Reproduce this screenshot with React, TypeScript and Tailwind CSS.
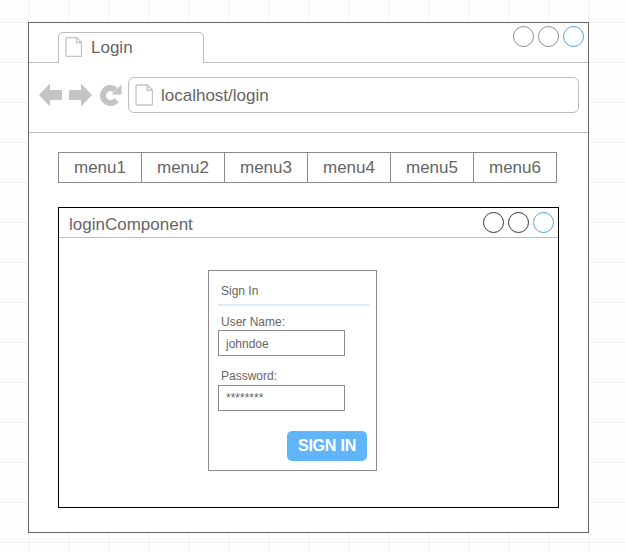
const menus = ['menu1', 'menu2', 'menu3', 'menu4', 'menu5', 'menu6']

const FileIcon = ({ className }: { className: string }) => (
  <svg className={className} viewBox="0 0 17 20" fill="none" stroke="#c4c4c4" strokeWidth="1.3">
    <path d="M1 1.5a1 1 0 0 1 1-1h9.5l5 5V18.5a1 1 0 0 1-1 1H2a1 1 0 0 1-1-1Z" />
    <path d="M11.5 .5V5.500H16.500" />
  </svg>
)

const WindowButtons = ({ dark }: { dark?: boolean }) => {
  const ring = dark ? 'border-[#333]' : 'border-[#8c8c8c]'
  return (
    <div className="flex gap-1">
      <div className={`w-[21px] h-[21px] rounded-full border ${ring}`} />
      <div className={`w-[21px] h-[21px] rounded-full border ${ring}`} />
      <div className="w-[21px] h-[21px] rounded-full border border-[#4fa3d8]" />
    </div>
  )
}

const NavIcons = () => (
  <div className="flex items-center gap-[7px] ml-[10px] w-[89px]">
    <svg width="23" height="24" viewBox="0 0 23 24" fill="#c4c4c4">
      <path d="M0 12 11 .5V7H23V17H11V23.500Z" />
    </svg>
    <svg width="23" height="24" viewBox="0 0 23 24" fill="#c4c4c4">
      <path d="M23 12 12 .5V7H0V17H12V23.500Z" />
    </svg>
    <svg width="22" height="24" viewBox="0 0 22 24" className="ml-[1px]">
      <path d="M15.500 7A7.500 7.500 0 1 0 16.500 17" fill="none" stroke="#c4c4c4" strokeWidth="6" />
      <path d="M21.500 1.500V11.500H11.500Z" fill="#c4c4c4" />
    </svg>
  </div>
)

export default function App() {
  return (
    <div className="w-[625px] h-[552px] overflow-hidden pt-[22px] pl-[28px] bg-white bg-[linear-gradient(#f1f1f1_1px,transparent_1px),linear-gradient(90deg,#f1f1f1_1px,transparent_1px),linear-gradient(#fbfbfb_1px,transparent_1px),linear-gradient(90deg,#fbfbfb_1px,transparent_1px)] bg-[size:40px_40px,40px_40px,8px_8px,8px_8px] bg-[position:28px_22px] font-['Liberation_Sans',Arial,sans-serif] text-[#666]">
      <div className="w-[561px] h-[511px] border border-[#666] bg-white">
        <div className="h-[40px] border-b border-[#bdbdbd] flex justify-between pl-[29px] pr-[4px] pt-[3px]">
          <div className="w-[146px] h-[31px] mt-[6px] flex items-center gap-[9px] pl-[6px] pb-[2px] border border-b-0 border-[#bdbdbd] rounded-t-[5px] bg-white relative">
            <FileIcon className="w-[17px] h-[20px]" />
            <span className="text-[17px] leading-none">Login</span>
          </div>
          <WindowButtons />
        </div>

        <div className="h-[70px] border-b border-[#bdbdbd] flex items-center pb-[5px]">
          <NavIcons />
          <div className="w-[451px] h-[36px] flex items-center gap-[8px] pl-[6px] border border-[#bdbdbd] rounded-[6px]">
            <FileIcon className="w-[18px] h-[22px]" />
            <span className="text-[17px] leading-none">localhost/login</span>
          </div>
        </div>

        <div className="ml-[29px] mt-[19px] w-[499px] h-[31px] grid grid-cols-[repeat(5,83px)_1fr] border border-[#8c8c8c]">
          {menus.map((m, i) => (
            <div key={m} className={`flex items-center justify-center text-[17px] ${i < 5 ? 'border-r border-[#8c8c8c]' : ''}`}>
              {m}
            </div>
          ))}
        </div>

        <div className="ml-[29px] mt-[24px] w-[501px] h-[301px] border border-black">
          <div className="h-[30px] border-b border-[#bdbdbd] flex items-center justify-between pl-[10px] pr-[4px]">
            <span className="text-[17px] leading-none pt-[3px]">loginComponent</span>
            <WindowButtons dark />
          </div>

          <div className="ml-[149px] mt-[32px] w-[169px] h-[201px] border border-[#8c8c8c] px-[9px] text-[12px] leading-none">
            <div className="h-[35px] border-b-2 border-[#dbe9f8] -mr-[2px] pl-[3px] pt-[14px]">Sign In</div>
            <div className="pl-[3px] mt-[10px]">User Name:</div>
            <div className="w-[127px] h-[26px] mt-[2px] flex items-center pl-[7px] pt-[2px] border border-[#8c8c8c]">johndoe</div>
            <div className="pl-[3px] mt-[14px]">Password:</div>
            <div className="w-[127px] h-[26px] mt-[3px] flex items-center pl-[7px] border border-[#8c8c8c]">********</div>
            <div className="flex justify-end mt-[20px]">
              <button className="w-[80px] h-[30px] bg-[#5fb5f8] rounded-[5px] text-white font-bold text-[16px] tracking-[-0.2px] leading-none">SIGN IN</button>
            </div>
          </div>
        </div>
      </div>
    </div>
  )
}
